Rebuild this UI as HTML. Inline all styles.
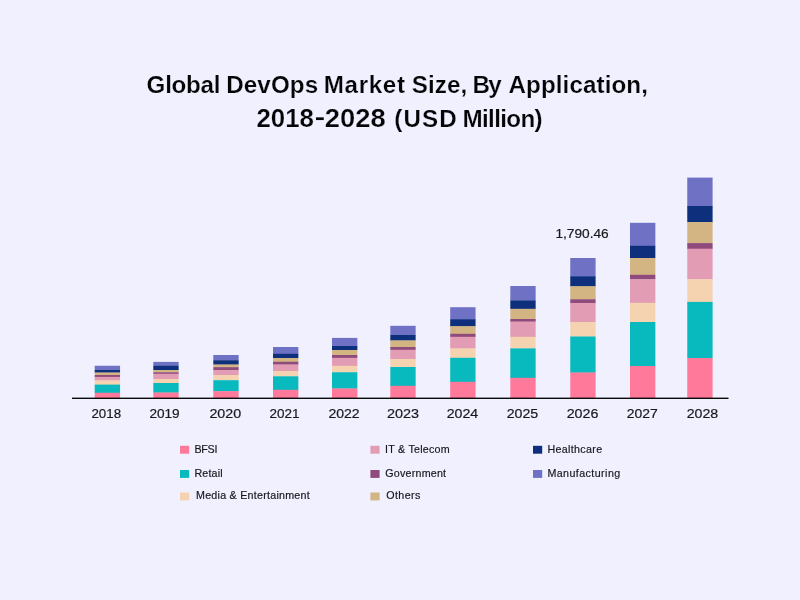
<!DOCTYPE html>
<html><head><meta charset="utf-8"><title>Global DevOps Market Size</title>
<style>
html,body{margin:0;padding:0;background:#F1F0FF;}
body{width:800px;height:600px;overflow:hidden;font-family:"Liberation Sans",sans-serif;}
svg{display:block;will-change:transform;}
text{font-family:"Liberation Sans",sans-serif;}
.title{font-size:23.6px;font-weight:bold;fill:#0c0c10;}
.yr{font-size:14px;fill:#1b1b1f;}
.lg{font-size:11px;fill:#1b1b1f;}
.val{font-size:13.4px;fill:#1b1b1f;}
</style></head><body>
<svg width="800" height="600" viewBox="0 0 800 600">
<rect width="800" height="600" fill="#F1F0FF"/>
<text x="146.60" y="92.7" style="font-size:24.2px;font-weight:bold;fill:#050507;stroke:#F1F0FF;stroke-width:0.22px;letter-spacing:-0.270px">Global</text>
<text x="226.25" y="92.7" style="font-size:24.2px;font-weight:bold;fill:#050507;stroke:#F1F0FF;stroke-width:0.22px;letter-spacing:0.100px">DevOps</text>
<text x="323.75" y="92.7" style="font-size:24.2px;font-weight:bold;fill:#050507;stroke:#F1F0FF;stroke-width:0.22px;letter-spacing:0.650px">Market</text>
<text x="411.75" y="92.7" style="font-size:24.2px;font-weight:bold;fill:#050507;stroke:#F1F0FF;stroke-width:0.22px;letter-spacing:0.062px">Size,</text>
<text x="472.50" y="92.7" style="font-size:24.2px;font-weight:bold;fill:#050507;stroke:#F1F0FF;stroke-width:0.22px;letter-spacing:-1.750px">By</text>
<text x="508.50" y="92.7" style="font-size:24.2px;font-weight:bold;fill:#050507;stroke:#F1F0FF;stroke-width:0.22px;letter-spacing:0.091px">Application,</text>
<text transform="translate(256.43,127.1) scale(1.0692,1.04)" style="font-size:24.2px;font-weight:bold;fill:#050507;stroke:#F1F0FF;stroke-width:0.22px;">2018</text>
<rect x="316.0" y="117.35" width="7.75" height="2.7" fill="#07070b"/>
<text transform="translate(324.77,127.1) scale(1.1317,1.04)" style="font-size:24.2px;font-weight:bold;fill:#050507;stroke:#F1F0FF;stroke-width:0.22px;">2028</text>
<text x="394.35" y="127.1" style="font-size:24.2px;font-weight:bold;fill:#050507;stroke:#F1F0FF;stroke-width:0.22px;letter-spacing:1.050px">(USD</text>
<text x="462.50" y="127.1" style="font-size:24.2px;font-weight:bold;fill:#050507;stroke:#F1F0FF;stroke-width:0.22px;letter-spacing:-0.643px">Million)</text>

<rect x="94.7" y="365.75" width="25.35" height="4.55" fill="#6F72C4"/>
<rect x="94.7" y="370" width="25.35" height="2.80" fill="#0D2F7C"/>
<rect x="94.7" y="372.5" width="25.35" height="2.80" fill="#D3B483"/>
<rect x="94.7" y="375" width="25.35" height="2.20" fill="#8E4B7C"/>
<rect x="94.7" y="376.9" width="25.35" height="3.80" fill="#E29CB4"/>
<rect x="94.7" y="380.4" width="25.35" height="4.50" fill="#F5D3B0"/>
<rect x="94.7" y="384.6" width="25.35" height="8.45" fill="#08BABE"/>
<rect x="94.7" y="392.75" width="25.35" height="5.45" fill="#FF7A9A"/>
<rect x="153.3" y="361.9" width="25.35" height="4.20" fill="#6F72C4"/>
<rect x="153.3" y="365.8" width="25.35" height="4.50" fill="#0D2F7C"/>
<rect x="153.3" y="370" width="25.35" height="2.55" fill="#D3B483"/>
<rect x="153.3" y="372.25" width="25.35" height="1.80" fill="#8E4B7C"/>
<rect x="153.3" y="373.75" width="25.35" height="5.55" fill="#E29CB4"/>
<rect x="153.3" y="379" width="25.35" height="4.30" fill="#F5D3B0"/>
<rect x="153.3" y="383" width="25.35" height="9.80" fill="#08BABE"/>
<rect x="153.3" y="392.5" width="25.35" height="5.70" fill="#FF7A9A"/>
<rect x="213.3" y="355" width="25.35" height="5.55" fill="#6F72C4"/>
<rect x="213.3" y="360.25" width="25.35" height="4.55" fill="#0D2F7C"/>
<rect x="213.3" y="364.5" width="25.35" height="2.95" fill="#D3B483"/>
<rect x="213.3" y="367.15" width="25.35" height="3.15" fill="#8E4B7C"/>
<rect x="213.3" y="370" width="25.35" height="5.30" fill="#E29CB4"/>
<rect x="213.3" y="375" width="25.35" height="5.50" fill="#F5D3B0"/>
<rect x="213.3" y="380.2" width="25.35" height="11.25" fill="#08BABE"/>
<rect x="213.3" y="391.15" width="25.35" height="7.05" fill="#FF7A9A"/>
<rect x="273.0" y="347" width="25.35" height="7.10" fill="#6F72C4"/>
<rect x="273.0" y="353.8" width="25.35" height="4.50" fill="#0D2F7C"/>
<rect x="273.0" y="358" width="25.35" height="4.05" fill="#D3B483"/>
<rect x="273.0" y="361.75" width="25.35" height="3.05" fill="#8E4B7C"/>
<rect x="273.0" y="364.5" width="25.35" height="6.80" fill="#E29CB4"/>
<rect x="273.0" y="371" width="25.35" height="5.60" fill="#F5D3B0"/>
<rect x="273.0" y="376.3" width="25.35" height="13.80" fill="#08BABE"/>
<rect x="273.0" y="389.8" width="25.35" height="8.40" fill="#FF7A9A"/>
<rect x="332.0" y="337.9" width="25.35" height="8.40" fill="#6F72C4"/>
<rect x="332.0" y="346" width="25.35" height="4.30" fill="#0D2F7C"/>
<rect x="332.0" y="350" width="25.35" height="5.30" fill="#D3B483"/>
<rect x="332.0" y="355" width="25.35" height="3.15" fill="#8E4B7C"/>
<rect x="332.0" y="357.85" width="25.35" height="8.25" fill="#E29CB4"/>
<rect x="332.0" y="365.8" width="25.35" height="6.75" fill="#F5D3B0"/>
<rect x="332.0" y="372.25" width="25.35" height="16.50" fill="#08BABE"/>
<rect x="332.0" y="388.45" width="25.35" height="9.75" fill="#FF7A9A"/>
<rect x="390.3" y="325.8" width="25.35" height="9.50" fill="#6F72C4"/>
<rect x="390.3" y="335" width="25.35" height="5.70" fill="#0D2F7C"/>
<rect x="390.3" y="340.4" width="25.35" height="6.90" fill="#D3B483"/>
<rect x="390.3" y="347" width="25.35" height="3.10" fill="#8E4B7C"/>
<rect x="390.3" y="349.8" width="25.35" height="9.50" fill="#E29CB4"/>
<rect x="390.3" y="359" width="25.35" height="8.30" fill="#F5D3B0"/>
<rect x="390.3" y="367" width="25.35" height="19.10" fill="#08BABE"/>
<rect x="390.3" y="385.8" width="25.35" height="12.40" fill="#FF7A9A"/>
<rect x="450.2" y="307.2" width="25.35" height="12.30" fill="#6F72C4"/>
<rect x="450.2" y="319.2" width="25.35" height="7.30" fill="#0D2F7C"/>
<rect x="450.2" y="326.2" width="25.35" height="7.90" fill="#D3B483"/>
<rect x="450.2" y="333.8" width="25.35" height="3.30" fill="#8E4B7C"/>
<rect x="450.2" y="336.8" width="25.35" height="11.90" fill="#E29CB4"/>
<rect x="450.2" y="348.4" width="25.35" height="9.70" fill="#F5D3B0"/>
<rect x="450.2" y="357.8" width="25.35" height="24.30" fill="#08BABE"/>
<rect x="450.2" y="381.8" width="25.35" height="16.40" fill="#FF7A9A"/>
<rect x="510.3" y="286" width="25.35" height="14.70" fill="#6F72C4"/>
<rect x="510.3" y="300.4" width="25.35" height="8.70" fill="#0D2F7C"/>
<rect x="510.3" y="308.8" width="25.35" height="10.50" fill="#D3B483"/>
<rect x="510.3" y="319" width="25.35" height="2.90" fill="#8E4B7C"/>
<rect x="510.3" y="321.6" width="25.35" height="15.50" fill="#E29CB4"/>
<rect x="510.3" y="336.8" width="25.35" height="11.90" fill="#F5D3B0"/>
<rect x="510.3" y="348.4" width="25.35" height="29.70" fill="#08BABE"/>
<rect x="510.3" y="377.8" width="25.35" height="20.40" fill="#FF7A9A"/>
<rect x="570.25" y="258" width="25.35" height="18.55" fill="#6F72C4"/>
<rect x="570.25" y="276.25" width="25.35" height="10.30" fill="#0D2F7C"/>
<rect x="570.25" y="286.25" width="25.35" height="13.30" fill="#D3B483"/>
<rect x="570.25" y="299.25" width="25.35" height="4.05" fill="#8E4B7C"/>
<rect x="570.25" y="303" width="25.35" height="19.30" fill="#E29CB4"/>
<rect x="570.25" y="322" width="25.35" height="14.80" fill="#F5D3B0"/>
<rect x="570.25" y="336.5" width="25.35" height="36.30" fill="#08BABE"/>
<rect x="570.25" y="372.5" width="25.35" height="25.70" fill="#FF7A9A"/>
<rect x="630.0" y="222.8" width="25.35" height="23.30" fill="#6F72C4"/>
<rect x="630.0" y="245.8" width="25.35" height="12.50" fill="#0D2F7C"/>
<rect x="630.0" y="258" width="25.35" height="17.10" fill="#D3B483"/>
<rect x="630.0" y="274.8" width="25.35" height="4.70" fill="#8E4B7C"/>
<rect x="630.0" y="279.2" width="25.35" height="23.90" fill="#E29CB4"/>
<rect x="630.0" y="302.8" width="25.35" height="19.50" fill="#F5D3B0"/>
<rect x="630.0" y="322" width="25.35" height="44.30" fill="#08BABE"/>
<rect x="630.0" y="366" width="25.35" height="32.20" fill="#FF7A9A"/>
<rect x="687.25" y="177.6" width="25.35" height="28.70" fill="#6F72C4"/>
<rect x="687.25" y="206" width="25.35" height="16.30" fill="#0D2F7C"/>
<rect x="687.25" y="222" width="25.35" height="21.40" fill="#D3B483"/>
<rect x="687.25" y="243.1" width="25.35" height="5.90" fill="#8E4B7C"/>
<rect x="687.25" y="248.7" width="25.35" height="30.80" fill="#E29CB4"/>
<rect x="687.25" y="279.2" width="25.35" height="23.00" fill="#F5D3B0"/>
<rect x="687.25" y="301.9" width="25.35" height="56.40" fill="#08BABE"/>
<rect x="687.25" y="358" width="25.35" height="40.20" fill="#FF7A9A"/>
<rect x="72" y="397.6" width="656.5" height="1.4" fill="#0a0a0a"/>
<text transform="translate(91.45,418.1) scale(1.0088,1)" style="font-size:13.2px;fill:#18181c;stroke:#18181c;stroke-width:0.2px;">2018</text>
<text transform="translate(149.43,418.1) scale(1.0301,1)" style="font-size:13.2px;fill:#18181c;stroke:#18181c;stroke-width:0.2px;">2019</text>
<text transform="translate(209.41,418.1) scale(1.0825,1)" style="font-size:13.2px;fill:#18181c;stroke:#18181c;stroke-width:0.2px;">2020</text>
<text transform="translate(269.44,418.1) scale(1.0212,1)" style="font-size:13.2px;fill:#18181c;stroke:#18181c;stroke-width:0.2px;">2021</text>
<text transform="translate(328.42,418.1) scale(1.0655,1)" style="font-size:13.2px;fill:#18181c;stroke:#18181c;stroke-width:0.2px;">2022</text>
<text transform="translate(386.90,418.1) scale(1.0920,1)" style="font-size:13.2px;fill:#18181c;stroke:#18181c;stroke-width:0.2px;">2023</text>
<text transform="translate(446.66,418.1) scale(1.0737,1)" style="font-size:13.2px;fill:#18181c;stroke:#18181c;stroke-width:0.2px;">2024</text>
<text transform="translate(506.66,418.1) scale(1.0737,1)" style="font-size:13.2px;fill:#18181c;stroke:#18181c;stroke-width:0.2px;">2025</text>
<text transform="translate(566.66,418.1) scale(1.0832,1)" style="font-size:13.2px;fill:#18181c;stroke:#18181c;stroke-width:0.2px;">2026</text>
<text transform="translate(626.67,418.1) scale(1.0566,1)" style="font-size:13.2px;fill:#18181c;stroke:#18181c;stroke-width:0.2px;">2027</text>
<text transform="translate(686.66,418.1) scale(1.0743,1)" style="font-size:13.2px;fill:#18181c;stroke:#18181c;stroke-width:0.2px;">2028</text>
<text transform="translate(555.38,238.3) scale(1.0157,1)" style="font-size:13.5px;fill:#18181c;stroke:#18181c;stroke-width:0.2px;">1,790.46</text>
<rect x="180" y="445.8" width="9.2" height="7.9" fill="#FF7A9A"/>
<rect x="180" y="470" width="9.2" height="7.9" fill="#08BABE"/>
<rect x="180" y="492.5" width="9.2" height="7.9" fill="#F5D3B0"/>
<rect x="370.4" y="445.8" width="9.2" height="7.9" fill="#E29CB4"/>
<rect x="370.4" y="470" width="9.2" height="7.9" fill="#8E4B7C"/>
<rect x="370.4" y="492.5" width="9.2" height="7.9" fill="#D3B483"/>
<rect x="533" y="445.8" width="9.2" height="7.9" fill="#0D2F7C"/>
<rect x="533" y="470" width="9.2" height="7.9" fill="#6F72C4"/>
<text x="194.50" y="452.7" style="font-size:10.7px;fill:#18181c;stroke:#18181c;stroke-width:0.18px;letter-spacing:-0.283px">BFSI</text>
<text x="194.50" y="476.7" style="font-size:10.7px;fill:#18181c;stroke:#18181c;stroke-width:0.18px;letter-spacing:0.150px">Retail</text>
<text x="196.00" y="499.25" style="font-size:10.7px;fill:#18181c;stroke:#18181c;stroke-width:0.18px;letter-spacing:0.250px">Media &amp; Entertainment</text>
<text x="385.10" y="452.6" style="font-size:10.7px;fill:#18181c;stroke:#18181c;stroke-width:0.18px;letter-spacing:0.232px">IT &amp; Telecom</text>
<text x="385.35" y="476.7" style="font-size:10.7px;fill:#18181c;stroke:#18181c;stroke-width:0.18px;letter-spacing:0.211px">Government</text>
<text x="386.25" y="499.2" style="font-size:10.7px;fill:#18181c;stroke:#18181c;stroke-width:0.18px;letter-spacing:0.400px">Others</text>
<text x="547.40" y="452.6" style="font-size:10.7px;fill:#18181c;stroke:#18181c;stroke-width:0.18px;letter-spacing:0.333px">Healthcare</text>
<text x="547.40" y="476.7" style="font-size:10.7px;fill:#18181c;stroke:#18181c;stroke-width:0.18px;letter-spacing:0.425px">Manufacturing</text>
</svg></body></html>
